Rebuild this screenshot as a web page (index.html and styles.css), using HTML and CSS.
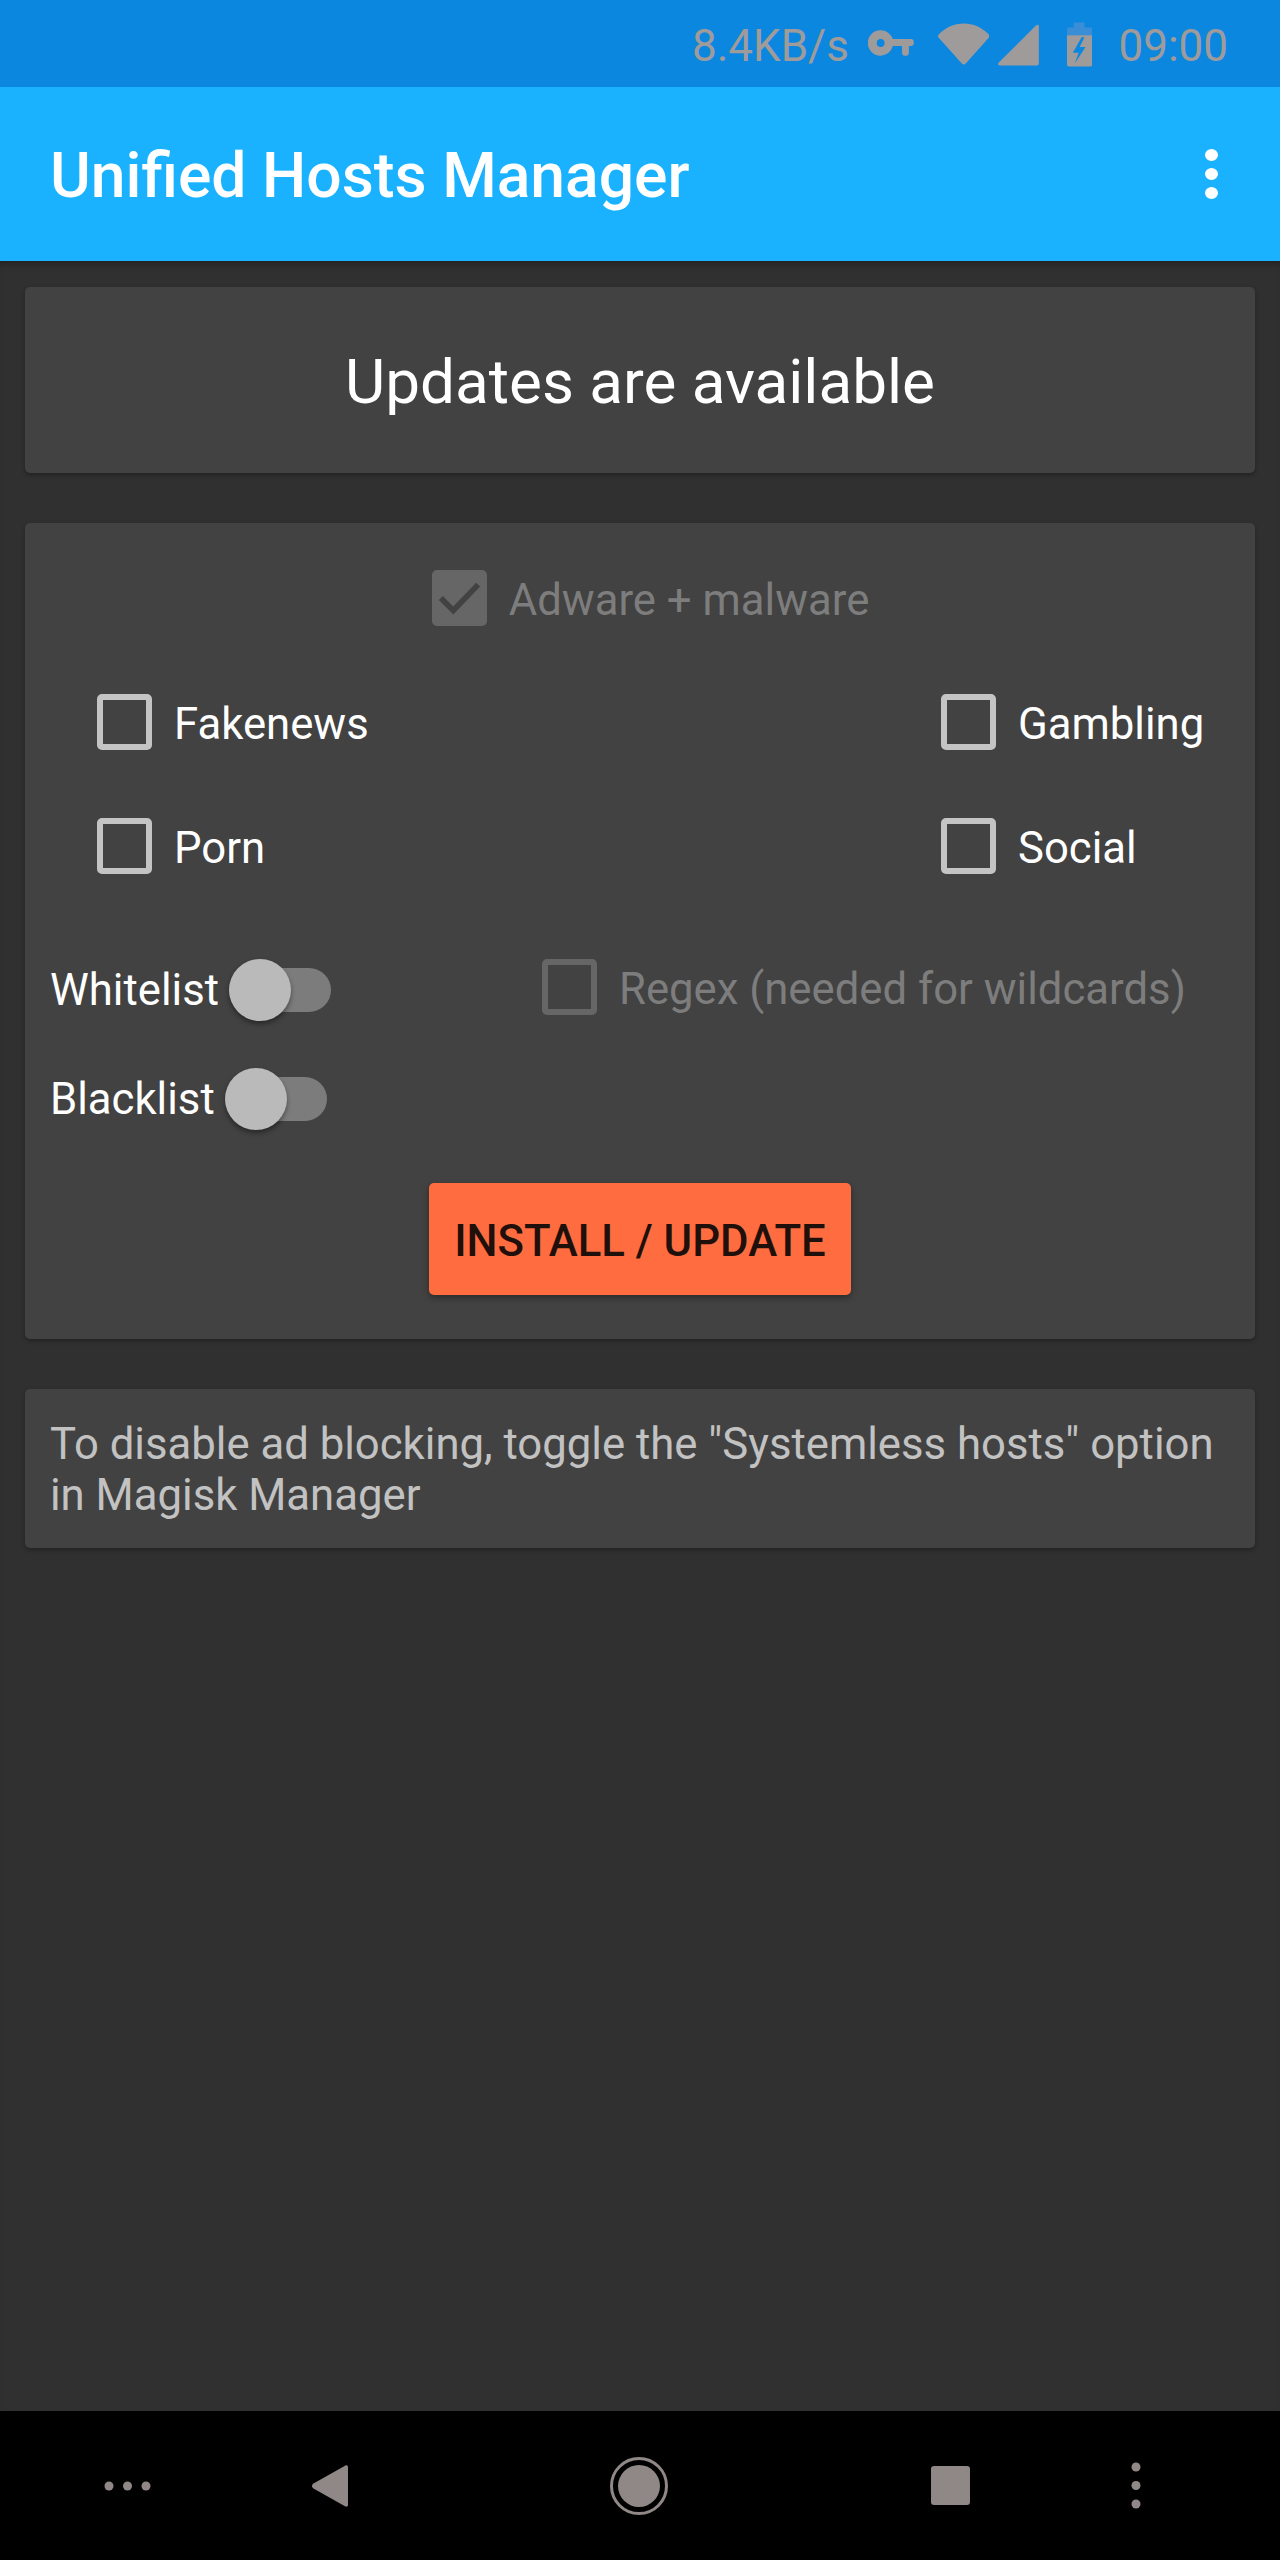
FILE: index.html
```html
<!DOCTYPE html>
<html lang="en">
<head>
    <meta charset="UTF-8">
    <meta name="viewport" content="width=device-width, initial-scale=1.0">
    <title>Unified Hosts Manager</title>
    <link rel="stylesheet" href="styles.css">
</head>
<body>
    <div class="status-bar">
        <span class="status-text">8.4KB/s</span>
        <svg class="icon-key" width="47" height="26" viewBox="0 0 47 26"><path d="M13 0a13 13 0 0 1 12.400 9H44a3 3 0 0 1 3 3v1a3 3 0 0 1-3 3h-2v7a3 3 0 0 1-3 3h-1a3 3 0 0 1-3-3v-7h-9.600A13 13 0 1 1 13 0zm0 9a4 4 0 1 0 0 8 4 4 0 0 0 0-8z" fill-rule="evenodd"/></svg>
        <svg class="icon-wifi" width="53" height="42" viewBox="0 0 53 42"><path d="M1 11C8 4 17 0 26.500 0S45 4 52 11c1 1 1.300 2 .5 3.200L28.500 41c-1 1.300-3 1.300-4 0L.5 14.200C-.3 13 0 12 1 11z"/></svg>
        <svg class="icon-signal" width="42" height="42" viewBox="0 0 42 42"><path d="M39 1c1.500-1.500 3-.8 3 1v38a2 2 0 0 1-2 2H2c-2 0-2.500-1.500-1.200-3z"/></svg>
        <svg class="icon-battery" width="26" height="45" viewBox="0 0 26 45"><path class="battery-empty" d="M7 0h11v5h6a2 2 0 0 1 2 2v6H0V7a2 2 0 0 1 2-2h5z"/><path fill-rule="evenodd" d="M0 13h26v30a2 2 0 0 1-2 2H2a2 2 0 0 1-2-2zm15 2-9 16h6l-4 11 11-17h-6l5-10z"/></svg>
        <span class="status-text time">09:00</span>
    </div>

    <div class="toolbar">
        <h1 class="title">Unified Hosts Manager</h1>
        <div class="overflow"><i></i><i></i><i></i></div>
    </div>

    <div class="content">
        <div class="card status-card">Updates are available</div>

        <div class="card options-card">
            <div class="row-center adware">
                <label class="check disabled">
                    <span class="box checked">
                        <svg width="45" height="36" viewBox="0 0 45 36"><path d="M3 18l13 13L42 4" fill="none" stroke="#424242" stroke-width="6"/></svg>
                    </span>
                    Adware + malware
                </label>
            </div>
            <div class="row-split">
                <label class="check"><span class="box"></span>Fakenews</label>
                <label class="check"><span class="box"></span>Gambling</label>
            </div>
            <div class="row-split">
                <label class="check"><span class="box"></span>Porn</label>
                <label class="check"><span class="box"></span>Social</label>
            </div>
            <div class="lists">
                <div class="list-toggles">
                    <div class="toggle-row">Whitelist<span class="switch"></span></div>
                    <div class="toggle-row blacklist">Blacklist<span class="switch"></span></div>
                </div>
                <label class="check disabled regex"><span class="box"></span>Regex (needed for wildcards)</label>
            </div>
            <div class="row-center">
                <button class="install">INSTALL / UPDATE</button>
            </div>
        </div>

        <div class="card note-card">To disable ad blocking, toggle the "Systemless hosts" option in Magisk Manager</div>
    </div>

    <div class="nav-bar">
        <svg width="47" height="10" viewBox="0 0 47 10"><circle cx="5" cy="5" r="4.500"/><circle cx="23.500" cy="5" r="4.500"/><circle cx="42" cy="5" r="4.500"/></svg>
        <svg class="nav-back" width="36" height="42" viewBox="0 0 36 42"><path d="M33 .8c1.500-1 3-.4 3 1.500v37.400c0 1.900-1.500 2.500-3 1.500L1.500 23.500c-2-1.400-2-3.600 0-5z"/></svg>
        <svg class="nav-home" width="58" height="58" viewBox="0 0 58 58"><circle cx="29" cy="29" r="27.500" fill="none" stroke="#908886" stroke-width="3"/><circle cx="29" cy="29" r="21"/></svg>
        <svg class="nav-recent" width="39" height="39" viewBox="0 0 39 39"><rect width="39" height="39" rx="3"/></svg>
        <svg class="nav-menu" width="10" height="47" viewBox="0 0 10 47"><circle cx="5" cy="5" r="4.500"/><circle cx="5" cy="23.500" r="4.500"/><circle cx="5" cy="42" r="4.500"/></svg>
    </div>
</body>
</html>
```

FILE: styles.css
```css
* {
    box-sizing: border-box;
}
body {
    margin: 0;
    width: 1280px;
    height: 2560px;
    display: flex;
    flex-direction: column;
    background-color: #303030;
    font-family: Roboto, "Liberation Sans", sans-serif;
    font-size: 43.7px;
    color: #ffffff;
}

/* status bar */
.status-bar {
    height: 87px;
    flex-shrink: 0;
    display: flex;
    align-items: center;
    padding: 4px 52px 0 692px;
    background-color: #0c87e0;
    fill: #a09b9b;
}
.status-text {
    font-size: 44px;
    color: #a09b9b;
}
.icon-key {
    margin-left: 19px;
    margin-top: -5px;
}
.icon-wifi {
    margin-left: 24px;
    margin-top: -4px;
}
.icon-signal {
    margin-left: 9px;
    margin-top: -1px;
}
.icon-battery {
    margin-left: 28px;
    margin-top: -3px;
}
.battery-empty {
    fill: #3a8ed6;
}
.time {
    margin-left: 26px;
}

/* toolbar */
.toolbar {
    height: 174px;
    flex-shrink: 0;
    display: flex;
    align-items: center;
    justify-content: space-between;
    padding: 0 62px 0 50px;
    background-color: #1ab2ff;
}
.title {
    margin: 3px 0 0;
    font-size: 62.4px;
    font-weight: 500;
}
.overflow {
    display: flex;
    flex-direction: column;
    gap: 7px;
}
.overflow i {
    width: 13px;
    height: 12px;
    border-radius: 50%;
    background-color: #ffffff;
}

/* cards */
.content {
    flex: 1;
    display: flex;
    flex-direction: column;
    gap: 50px;
    padding: 26px 25px 0;
    box-shadow: inset 0 8px 8px -6px rgba(0, 0, 0, 0.35);
}
.card {
    background-color: #424242;
    border-radius: 5px;
    box-shadow: 0 2px 4px rgba(0, 0, 0, 0.3);
}
.status-card {
    height: 186px;
    padding-top: 2px;
    display: flex;
    align-items: center;
    justify-content: center;
    font-size: 62px;
}
.options-card {
    height: 816px;
    padding: 49px 26px 0;
}
.note-card {
    height: 159px;
    padding: 30px 25px 0;
    line-height: 51px;
    color: #c2c2c2;
}

/* checkboxes */
.check {
    display: flex;
    align-items: center;
    gap: 22px;
}
.box {
    width: 55px;
    height: 56px;
    margin: -2px 0 2px;
    display: flex;
    align-items: center;
    justify-content: center;
    border: 6px solid #c4c4c4;
    border-radius: 5px;
}
.box.checked {
    border-color: #666666;
    background-color: #666666;
}
.check.disabled {
    color: #7d7d7d;
}
.check.disabled .box {
    border-color: #666666;
}
.row-center {
    display: flex;
    justify-content: center;
}
.adware {
    padding-left: 21px;
}
.row-split {
    display: flex;
    justify-content: space-between;
    margin-top: 68px;
    padding-left: 46px;
}
.row-split .check:last-child {
    width: 288px;
}

/* whitelist / blacklist */
.lists {
    display: flex;
    justify-content: space-between;
    align-items: flex-start;
    margin-top: 83px;
}
.list-toggles {
    width: 492px;
    margin-left: -1px;
}
.toggle-row {
    height: 62px;
    display: flex;
    align-items: center;
    gap: 10px;
}
.toggle-row.blacklist {
    margin-top: 47px;
}
.switch {
    position: relative;
    width: 102px;
    height: 44px;
    border-radius: 22px;
    background-color: #7c7c7c;
}
/* the thumb overhangs the track */
.switch::before {
    content: "";
    position: absolute;
    left: 0;
    top: -9px;
    width: 62px;
    height: 62px;
    border-radius: 50%;
    background-color: #bababa;
    box-shadow: 0 3px 5px rgba(0, 0, 0, 0.4);
}
.regex {
    flex: 1;
    margin-top: 2px;
}

/* button */
.install {
    width: 422px;
    height: 112px;
    margin-top: 53px;
    padding: 3px 0 0;
    border: 0;
    border-radius: 5px;
    background-color: #ff6c3f;
    color: #1f100c;
    font-family: inherit;
    font-size: 43.7px;
    font-weight: 500;
    box-shadow: 0 3px 6px rgba(0, 0, 0, 0.35);
}

/* navigation bar */
.nav-bar {
    height: 149px;
    flex-shrink: 0;
    display: flex;
    align-items: center;
    padding: 0 0 0 104px;
    background-color: #000000;
    fill: #908886;
}
.nav-back {
    margin-left: 161px;
}
.nav-home {
    margin-left: 262px;
}
.nav-recent {
    margin-left: 263px;
}
.nav-menu {
    margin-left: 161px;
}
```
